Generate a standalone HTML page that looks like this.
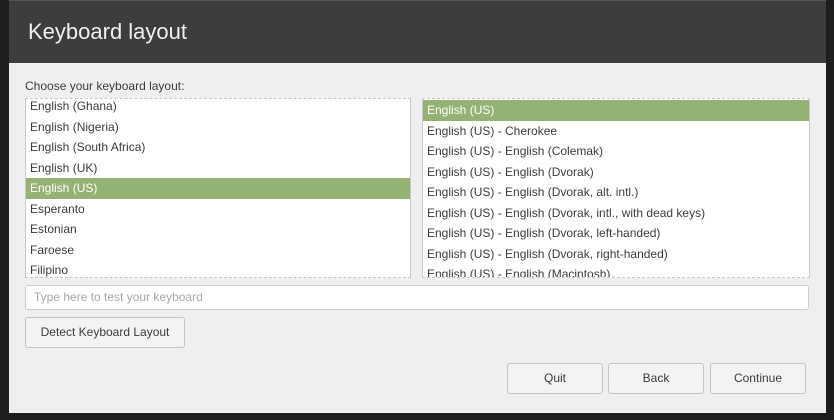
<!DOCTYPE html><html><head><style>
body{margin:0;width:834px;height:420px;background:#1e1e1e;font-family:"Liberation Sans","DejaVu Sans",sans-serif;position:relative;overflow:hidden;color:#3c3c3c}
.win{position:absolute;left:9px;top:0;width:817px;height:413px;background:#efefef}
.hdr{position:absolute;left:0;top:0;width:817px;height:63px;background:#3d3d3d;border-top:1px solid #555;box-sizing:border-box}
.hdr span{position:absolute;left:19px;top:18px;font-size:22px;color:#f0f0f0}
.lbl{position:absolute;left:16px;top:79px;font-size:12px;color:#3c3c3c}
.list{position:absolute;top:98px;height:180px;background:#fff;border:1px solid #c8c8c8;border-top:1px dashed #c8c8c8;border-bottom:1px dashed #c8c8c8;overflow:hidden;box-sizing:border-box}
.row{height:20.5px;line-height:20.5px;padding-left:4px;font-size:12px;white-space:nowrap}
.sel{background:#93b273;color:#fff}
.inp{position:absolute;left:16px;top:285px;width:784px;height:25px;background:#fff;border:1px solid #cdcdcd;border-radius:3px;box-sizing:border-box;font-size:12px;color:#a8a8a8;line-height:23px;padding-left:8px}
.btn{position:absolute;height:31px;border:1px solid #c4c4c4;border-radius:3px;background:#f3f3f3;box-sizing:border-box;font-size:12px;text-align:center;line-height:29px;color:#3c3c3c}
</style></head><body>
<div class="win">
<div class="hdr"><span>Keyboard layout</span></div>
<div class="lbl">Choose your keyboard layout:</div>
<div class="list" style="left:16px;width:386px">
<div style="margin-top:-3px">
<div class="row">English (Ghana)</div><div class="row">English (Nigeria)</div><div class="row">English (South Africa)</div><div class="row">English (UK)</div><div class="row sel">English (US)</div><div class="row">Esperanto</div><div class="row">Estonian</div><div class="row">Faroese</div><div class="row">Filipino</div></div></div>
<div class="list" style="left:413px;width:388px">
<div style="margin-top:1px">
<div class="row sel">English (US)</div><div class="row">English (US) - Cherokee</div><div class="row">English (US) - English (Colemak)</div><div class="row">English (US) - English (Dvorak)</div><div class="row">English (US) - English (Dvorak, alt. intl.)</div><div class="row">English (US) - English (Dvorak, intl., with dead keys)</div><div class="row">English (US) - English (Dvorak, left-handed)</div><div class="row">English (US) - English (Dvorak, right-handed)</div><div class="row">English (US) - English (Macintosh)</div></div></div>
<div class="inp">Type here to test your keyboard</div>
<div class="btn" style="left:16px;top:317px;width:160px">Detect Keyboard Layout</div>
<div class="btn" style="left:498px;top:363px;width:96px">Quit</div>
<div class="btn" style="left:599px;top:363px;width:96px">Back</div>
<div class="btn" style="left:701px;top:363px;width:96px">Continue</div>
</div>
</body></html>
